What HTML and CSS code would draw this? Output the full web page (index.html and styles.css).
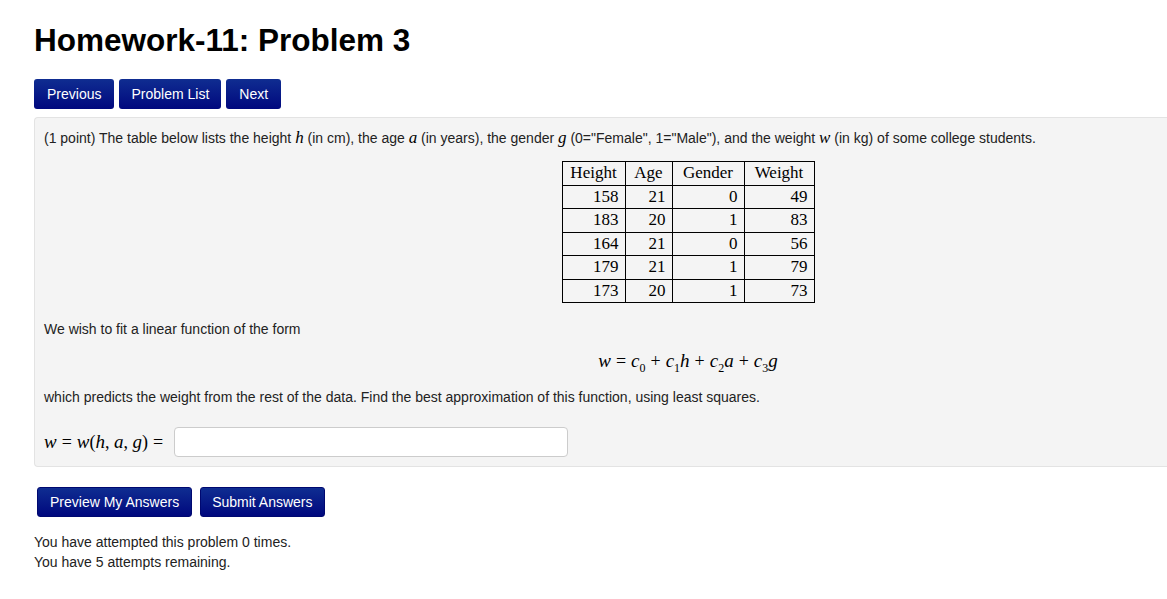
FILE: index.html
```html
<html>
<head>
    <title>Homework-11: Problem 3</title>
    <link rel="stylesheet" href="styles.css">
</head>
<body>
    <div id="mainCont">
        <h2 class="pageTitle">Homework-11: Problem 3</h2>

        <div class="navRow">
            <a class="navButton">Previous</a>
            <a class="navButton">Problem List</a>
            <a class="navButton">Next</a>
        </div>

        <div class="problemBox">
            <p class="intro">(1 point) The table below lists the height <span class="mathVar">h</span> (in cm), the age <span class="mathVar">a</span> (in years), the gender <span class="mathVar">g</span> (0="Female", 1="Male"), and the weight <span class="mathVar">w</span> (in kg) of some college students.</p>

            <div class="tableWrap centered">
                <table class="dataTable">
                    <tr><th>Height</th><th>Age</th><th>Gender</th><th>Weight</th></tr>
                    <tr><td>158</td><td>21</td><td>0</td><td>49</td></tr>
                    <tr><td>183</td><td>20</td><td>1</td><td>83</td></tr>
                    <tr><td>164</td><td>21</td><td>0</td><td>56</td></tr>
                    <tr><td>179</td><td>21</td><td>1</td><td>79</td></tr>
                    <tr><td>173</td><td>20</td><td>1</td><td>73</td></tr>
                </table>
            </div>

            <p class="para">We wish to fit a linear function of the form</p>

            <div class="formula centered">
                <span class="mathVar">w</span><span class="op">=</span><span class="mathVar">c</span><sub>0</sub><span class="op">+</span><span class="mathVar">c</span><sub>1</sub><span class="mathVar">h</span><span class="op">+</span><span class="mathVar">c</span><sub>2</sub><span class="mathVar">a</span><span class="op">+</span><span class="mathVar">c</span><sub>3</sub><span class="mathVar">g</span>
            </div>

            <p class="para">which predicts the weight from the rest of the data. Find the best approximation of this function, using least squares.</p>

            <div class="answerRow">
                <span class="answerLabel"><span class="mathVar">w</span><span class="op">=</span><span class="mathVar">w</span>(<span class="mathVar">h</span>, <span class="mathVar">a</span>, <span class="mathVar">g</span>)<span class="op">=</span></span>
                <input type="text" class="answerInput">
            </div>
        </div>

        <div class="submitRow">
            <input type="button" class="submitButton" value="Preview My Answers">
            <input type="button" class="submitButton" value="Submit Answers">
        </div>

        <div class="attempts">
            You have attempted this problem 0 times.<br>
            You have 5 attempts remaining.
        </div>
    </div>
</body>
</html>
```

FILE: styles.css
```css
body {
    margin: 0;
    background-color: white;
    font-family: "Liberation Sans", Arial, sans-serif;
    font-size: 14px;
    color: #222;
}

#mainCont {
    padding-left: 34px;
}

.pageTitle {
    font-size: 31.5px;
    font-weight: bold;
    color: black;
    margin: 0;
    padding-top: 21px;
    line-height: 38px;
}

.navRow {
    display: flex;
    gap: 5px;
    margin-top: 20px;
}

.navButton {
    display: block;
    height: 30px;
    line-height: 30px;
    padding: 0 13px;
    font-size: 14px;
    color: white;
    background: linear-gradient(#0f2d91, #00087e);
    border-radius: 3px;
}

.navButton + .navButton {
    padding: 0 12px;
}

.navButton:last-child {
    padding: 0 13px;
}

/* the box runs on past the right edge of the window */
.problemBox {
    margin-top: 8px;
    background-color: #f4f4f4;
    border: 1px solid #e3e3e3;
    border-right: none;
    border-radius: 4px 0 0 4px;
    padding: 11px 0 9px 9px;
}

.centered {
    padding-left: 165px;
}

.intro {
    margin: 0;
    line-height: 18px;
}

.mathVar {
    font-family: "Liberation Serif", serif;
    font-style: italic;
    font-size: 17px;
    color: black;
}

.op {
    margin: 0 5px;
}

.tableWrap {
    display: flex;
    justify-content: center;
    margin-top: 14px;
}

.dataTable {
    border-collapse: collapse;
    font-family: "Liberation Serif", serif;
    font-size: 17px;
    color: black;
}

.dataTable th, .dataTable td {
    border: 1px solid black;
    height: 23.5px;
    padding: 0 6px;
    text-align: right;
}

.dataTable th {
    font-weight: normal;
    text-align: center;
}

.dataTable th:nth-child(1), .dataTable td:nth-child(1) { width: 50px; }
.dataTable th:nth-child(2), .dataTable td:nth-child(2) { width: 34px; }
.dataTable th:nth-child(3), .dataTable td:nth-child(3) { width: 59px; }
.dataTable th:nth-child(4), .dataTable td:nth-child(4) { width: 57px; }

.para {
    margin: 0;
    line-height: 18px;
}

.tableWrap + .para {
    margin-top: 17px;
}

.formula {
    text-align: center;
    margin: 13px 0 10px;
    line-height: 20px;
    font-family: "Liberation Serif", serif;
    font-size: 18px;
    color: black;
}

.formula .mathVar {
    font-size: 19px;
}

.formula sub {
    font-size: 12px;
}

.answerRow {
    display: flex;
    align-items: center;
    gap: 6px;
    margin-top: 21px;
}

.answerLabel {
    font-family: "Liberation Serif", serif;
    font-size: 18px;
    color: black;
}

.answerLabel .mathVar {
    font-size: 19px;
}

.answerInput {
    width: 394px;
    height: 30px;
    box-sizing: border-box;
    border: 1px solid #ccc;
    border-radius: 4px;
    background: white;
}

.submitRow {
    display: flex;
    gap: 8px;
    margin-top: 20px;
    padding-left: 3px;
}

.submitButton {
    height: 30px;
    padding: 0 12px;
    font-family: "Liberation Sans", Arial, sans-serif;
    font-size: 14px;
    color: white;
    background: linear-gradient(#0f2d91, #00087e);
    border: 1px solid #000870;
    border-radius: 3px;
}

.submitButton + .submitButton {
    padding: 0 11px;
}

.attempts {
    margin-top: 15px;
    line-height: 20px;
    color: #222;
}
```
